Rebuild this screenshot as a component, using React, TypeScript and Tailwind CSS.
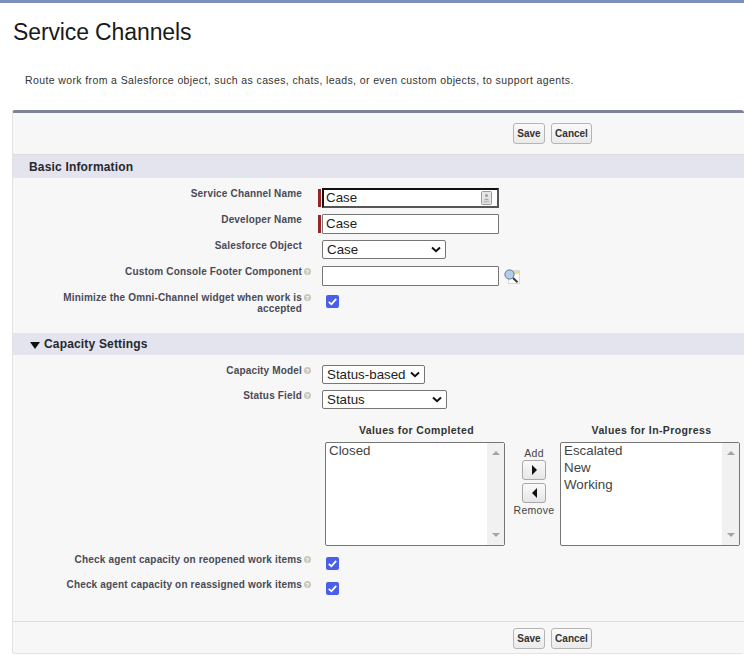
import React from 'react'

const labelCls = "text-right text-[10px] font-bold leading-[11px] tracking-[0.17px] text-[#4a4a56]"
const listTitleCls = "mb-[5px] pl-[3px] text-center text-[10.5px] font-bold leading-[14px] tracking-[0.38px] text-[#333]"

const Help = () => (
  <span className="absolute -right-[9px] top-[2px] flex h-[7px] w-[7px] items-center justify-center rounded-full bg-[#c9c5b8] text-[6px] font-bold leading-none text-white">
    ?
  </span>
)

const Label = ({ children, help }: { children: React.ReactNode; help?: boolean }) => (
  <div className="w-[289px] shrink-0">
    <div className={`relative ${labelCls}`}>
      {children}
      {help && <Help />}
    </div>
  </div>
)

const Check = () => (
  <span className="flex h-[13px] w-[13px] items-center justify-center rounded-[2px] bg-[#4a5fe8]">
    <svg viewBox="0 0 13 13" className="h-[13px] w-[13px]">
      <path d="M2.8 6.8 L5.4 9.3 L10.2 3.8" fill="none" stroke="#fff" strokeWidth="1.8" />
    </svg>
  </span>
)

const Btn = ({ children, width }: { children: React.ReactNode; width: string }) => (
  <button className={`h-[21px] rounded-[3px] border border-[#b5b5b5] bg-[linear-gradient(#fafafa,#eaeaea)] text-center text-[10px] font-bold text-[#333] ${width}`}>
    {children}
  </button>
)

const ButtonBar = ({ top }: { top: string }) => (
  <div className={`flex items-start gap-[6px] pl-[500px] ${top}`}>
    <Btn width="w-[32px]">Save</Btn>
    <Btn width="w-[41px]">Cancel</Btn>
  </div>
)

const Select = ({ value, width }: { value: string; width: string }) => (
  <div className={`flex h-[19px] items-center justify-between rounded-[2px] border border-[#767676] bg-white pl-[4px] pr-[4px] text-[13.33px] text-[#222] ${width}`}>
    <span className="whitespace-nowrap">{value}</span>
    <svg viewBox="0 0 10 7" className="h-[7px] w-[10px] shrink-0">
      <path d="M1 1.5 L5 5.2 L9 1.5" fill="none" stroke="#111" strokeWidth="2" />
    </svg>
  </div>
)

const ListBox = ({ items }: { items: string[] }) => (
  <div className="flex h-[104px] w-[180px] rounded-[2px] border border-[#767676] bg-white text-[13.33px] leading-[17px] text-[#444]">
    <div className="-mt-[1px] flex-1 pl-[3px]">
      {items.map((item) => (
        <div key={item}>{item}</div>
      ))}
    </div>
    <div className="flex w-[17px] flex-col items-center justify-between bg-[#f1f1f1] py-[8px]">
      <span className="h-0 w-0 border-x-[4px] border-b-[4px] border-x-transparent border-b-[#a3a3a3]" />
      <span className="h-0 w-0 border-x-[4px] border-t-[4px] border-x-transparent border-t-[#a3a3a3]" />
    </div>
  </div>
)

const ArrowBtn = ({ dir }: { dir: 'right' | 'left' }) => (
  <button className="flex h-[20px] w-[24px] items-center justify-center rounded-[3px] border border-[#a8a8a8] bg-[linear-gradient(#fafafa,#e6e6e6)]">
    {dir === 'right' ? (
      <span className="h-0 w-0 border-y-[5px] border-l-[5px] border-y-transparent border-l-[#111]" />
    ) : (
      <span className="h-0 w-0 border-y-[5px] border-r-[5px] border-y-transparent border-r-[#111]" />
    )}
  </button>
)

const PersonIcon = () => (
  <svg viewBox="0 0 11 14" className="h-[14px] w-[11px]">
    <rect x="0.5" y="0.5" width="10" height="13" rx="1" fill="#e6e6e6" stroke="#9a9a9a" />
    <circle cx="5.5" cy="4.6" r="1.5" fill="#9c9c9c" />
    <path d="M2.5 9.2 Q5.5 5.6 8.5 9.2 Z" fill="#a8a8a8" />
    <rect x="2.5" y="10" width="6" height="1.6" fill="#c2c2c2" />
  </svg>
)

const LookupIcon = () => (
  <svg viewBox="0 0 16 15" className="h-[15px] w-[16px]">
    <rect x="4.5" y="1.5" width="11" height="13" fill="#fff" stroke="#cfcfcf" strokeWidth="0.8" />
    <rect x="5" y="2" width="10" height="3" fill="#f0dd93" />
    <circle cx="5.5" cy="5.5" r="4.6" fill="#b3cdec" stroke="#5f7598" strokeWidth="1" />
    <path d="M9 9 L13.5 13.2" stroke="#3a3a3a" strokeWidth="2" />
  </svg>
)

export default function App() {
  return (
    <div className="h-[658px] w-[744px] overflow-hidden bg-white font-['Liberation_Sans',Arial,sans-serif]">
      <div className="h-[3px] bg-[#7d8fbd]" />
      <h1 className="mt-[15px] pl-[13px] text-[23px] leading-[28px] tracking-[-0.12px] text-[#1a1a1a]">Service Channels</h1>
      <p className="mt-[27px] pl-[25px] text-[10.5px] leading-[14px] tracking-[0.385px] text-[#333]">
        Route work from a Salesforce object, such as cases, chats, leads, or even custom objects, to support agents.
      </p>

      <div className="ml-[12px] mt-[23px] h-[544px] rounded-[3px] border border-t-[3px] border-r-0 border-[#e3e3e3] border-t-[#7e8399] bg-[#f7f7f7]">
        <div className="h-[41px]">
          <ButtonBar top="pt-[10px]" />
        </div>

        <div className="flex h-[24px] items-center border-t border-[#dcdcdc] bg-[#e3e4ed] pl-[16px] text-[12px] font-bold tracking-[0.17px] text-[#27282e]">
          Basic Information
        </div>

        <div className="flex items-start pt-[10px]">
          <Label>Service Channel Name</Label>
          <div className="relative ml-[20px]">
            <span className="absolute -left-[4px] top-[1px] h-[18px] w-[3px] bg-[#9a2424]" />
            <div className="flex h-[20px] w-[177px] items-center justify-between border-2 border-[#555] border-t-[#111] border-l-[#111] bg-white pl-[2px] pr-[5px] text-[13.33px] text-[#222]">
              <span>Case</span>
              <PersonIcon />
            </div>
          </div>
        </div>

        <div className="mt-[6px] flex items-start">
          <Label>Developer Name</Label>
          <div className="relative ml-[20px]">
            <span className="absolute -left-[4px] top-[1px] h-[18px] w-[3px] bg-[#9a2424]" />
            <div className="flex h-[20px] w-[177px] items-center rounded-[1px] border border-[#767676] bg-white pl-[3px] text-[13.33px] text-[#222]">
              Case
            </div>
          </div>
        </div>

        <div className="mt-[6px] flex items-start">
          <Label>Salesforce Object</Label>
          <div className="ml-[20px]">
            <Select value="Case" width="w-[124px]" />
          </div>
        </div>

        <div className="mt-[7px] flex items-start">
          <Label help>Custom Console Footer Component</Label>
          <div className="ml-[20px] flex items-center gap-[5px]">
            <div className="h-[20px] w-[177px] rounded-[1px] border border-[#767676] bg-white" />
            <LookupIcon />
          </div>
        </div>

        <div className="mt-[6px] flex items-start">
          <div className="w-[289px] shrink-0">
            <div className={`relative ${labelCls}`}>
              Minimize the Omni-Channel widget when work is
              <Help />
              <br />
              accepted
            </div>
          </div>
          <div className="ml-[24px] mt-[3px]">
            <Check />
          </div>
        </div>

        <div className="mt-[19px] flex h-[22px] items-center gap-[4px] bg-[#e3e4ed] pl-[17px] text-[12px] font-bold tracking-[0.17px] text-[#27282e]">
          <span className="mt-[3px] h-0 w-0 border-x-[5px] border-t-[7px] border-x-transparent border-t-[#111]" />
          Capacity Settings
        </div>

        <div className="mt-[10px] flex items-start">
          <Label help>Capacity Model</Label>
          <div className="ml-[20px]">
            <Select value="Status-based" width="w-[103px]" />
          </div>
        </div>

        <div className="mt-[6px] flex items-start">
          <Label help>Status Field</Label>
          <div className="ml-[20px]">
            <Select value="Status" width="w-[125px]" />
          </div>
        </div>

        <div className="ml-[312px] mt-[14px] flex items-start">
          <div className="flex w-[180px] flex-col">
            <div className={listTitleCls}>Values for Completed</div>
            <ListBox items={['Closed']} />
          </div>
          <div className="flex w-[55px] flex-col items-center pl-[3px] pt-[23px] text-[10.5px] leading-[14px] tracking-[0.3px] text-[#444]">
            <span>Add</span>
            <ArrowBtn dir="right" />
            <span className="h-[3px]" />
            <ArrowBtn dir="left" />
            <span>Remove</span>
          </div>
          <div className="flex w-[180px] flex-col">
            <div className={listTitleCls}>Values for In-Progress</div>
            <ListBox items={['Escalated', 'New', 'Working']} />
          </div>
        </div>

        <div className="mt-[8px] flex items-start">
          <Label help>Check agent capacity on reopened work items</Label>
          <div className="ml-[24px] mt-[3px]">
            <Check />
          </div>
        </div>

        <div className="mt-[9px] flex items-start">
          <Label help>Check agent capacity on reassigned work items</Label>
          <div className="ml-[24px] mt-[3px]">
            <Check />
          </div>
        </div>

        <div className="mt-[26px] border-t border-[#dcdcdc]">
          <ButtonBar top="pt-[6px]" />
        </div>
      </div>
    </div>
  )
}
